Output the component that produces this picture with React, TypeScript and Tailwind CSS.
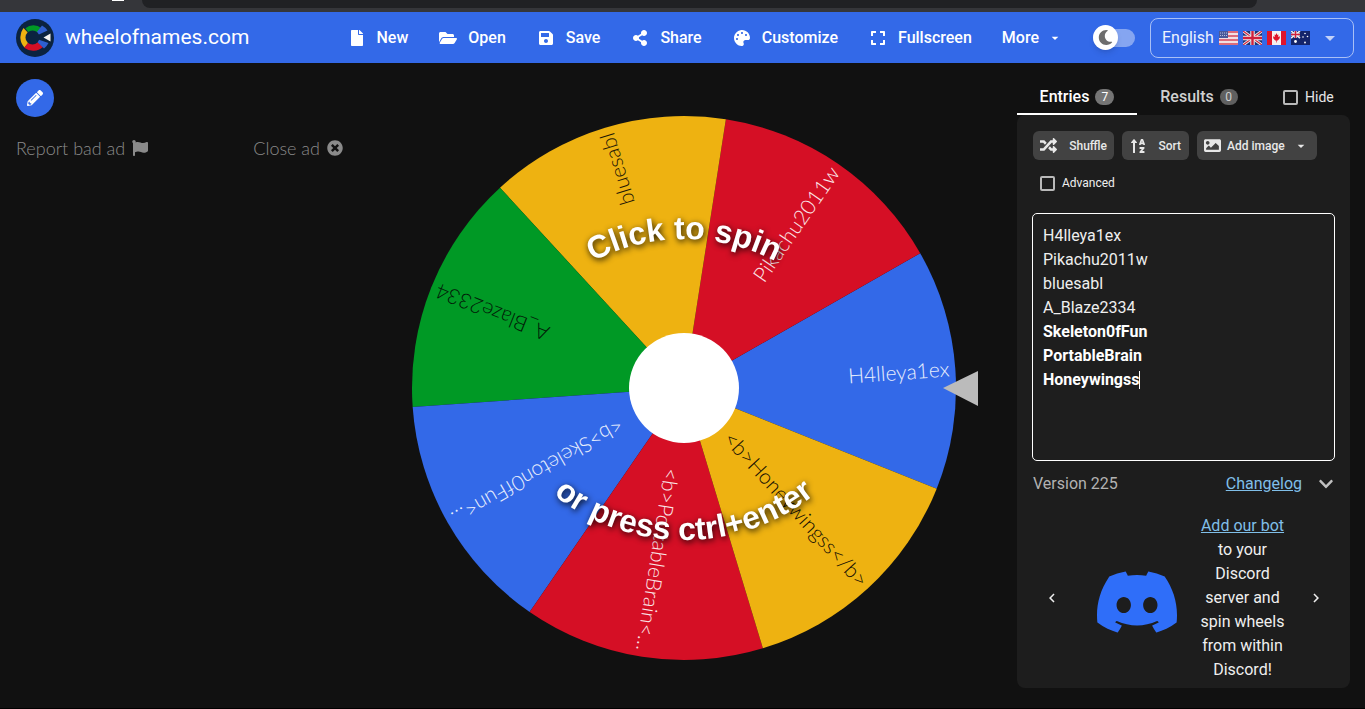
import type { ReactNode } from "react";
import {
  FaExpand,
  FaFile,
  FaFlag,
  FaFolderOpen,
  FaImage,
  FaMoon,
  FaPalette,
  FaPencilAlt,
  FaRandom,
  FaSave,
  FaShareAlt,
  FaSortAlphaUp,
  FaTimesCircle,
  FaChevronDown,
} from "react-icons/fa";
import { MdArrowDropDown, MdChevronLeft, MdChevronRight } from "react-icons/md";
import { SiDiscord } from "react-icons/si";

const BLUE = "#3369e8";
const RED = "#d50f25";
const YELLOW = "#eeb211";
const GREEN = "#009925";

const CX = 325;
const CY = 325;
const RADIUS = 272;
const STEP = 360 / 7;
const FIRST_ANGLE = -4;

const slices = [
  { label: "H4lleya1ex", fill: BLUE, ink: "#e9effd" },
  { label: "Pikachu2011w", fill: RED, ink: "#fbe4e7" },
  { label: "bluesabl", fill: YELLOW, ink: "#1f1806" },
  { label: "A_Blaze2334", fill: GREEN, ink: "#021a07" },
  { label: "<b>Skeleton0fFun<…", fill: BLUE, ink: "#e9effd" },
  { label: "<b>PortableBrain<…", fill: RED, ink: "#fbe4e7" },
  { label: "<b>Honeywingss</b>", fill: YELLOW, ink: "#140f03" },
];

function point(angle: number, r: number) {
  const rad = (angle * Math.PI) / 180;
  return `${(CX + r * Math.cos(rad)).toFixed(2)} ${(CY + r * Math.sin(rad)).toFixed(2)}`;
}

function Wheel() {
  return (
    <svg viewBox="0 0 650 645" className="block w-full cursor-pointer" role="img" aria-label="Wheel of names">
      <defs>
        <path id="arc-top" d="M128 373 A197 197 0 0 1 522 373" />
        <path id="arc-bottom" d="M114 266 A211 211 0 0 0 536 266" />
      </defs>
      {slices.map((s, i) => {
        const mid = FIRST_ANGLE - i * STEP;
        return (
          <path
            key={s.label}
            fill={s.fill}
            d={`M${CX} ${CY} L${point(mid - STEP / 2, RADIUS)} A${RADIUS} ${RADIUS} 0 0 1 ${point(mid + STEP / 2, RADIUS)} Z`}
          />
        );
      })}
      {slices.map((s, i) => (
        <text
          key={s.label}
          x={CX + 266}
          y={CY + 7}
          textAnchor="end"
          fill={s.ink}
          transform={`rotate(${FIRST_ANGLE - i * STEP} ${CX} ${CY})`}
          className="font-['Lato',sans-serif] text-[21px] font-light"
        >
          {s.label}
        </text>
      ))}
      <circle cx={CX} cy={CY} r="55" fill="#fff" />
      <path d="M584 325 L619 308 V343 Z" fill="#bbb" />
      <g className="fill-white font-['Liberation_Sans',sans-serif] text-[32px] font-bold [filter:drop-shadow(1px_2px_3px_rgba(0,0,0,0.9))]">
        <text textAnchor="middle">
          <textPath href="#arc-top" startOffset="50%">
            Click to spin
          </textPath>
        </text>
        <text textAnchor="middle">
          <textPath href="#arc-bottom" startOffset="50%">
            or press ctrl+enter
          </textPath>
        </text>
      </g>
    </svg>
  );
}

function Logo() {
  return (
    <svg viewBox="0 0 38 38" className="size-[38px] shrink-0" aria-hidden="true">
      <circle cx="19" cy="19" r="19" fill="#0b2340" />
      <path d="M16.5 18.5 L9.4 9.2 A12.5 12.5 0 0 1 25.5 9.2 Z" fill={GREEN} />
      <path d="M16.5 18.5 L8.5 28.5 A15 15 0 0 1 7.5 9 Z" fill={YELLOW} />
      <path d="M16.5 18.5 L27 28 A15 15 0 0 1 8.2 28.8 Z" fill={RED} />
      <path d="M16.5 18.5 L26 6.5 A16 16 0 0 1 31.5 11.5 Z" fill="#2f5fd0" />
      <path d="M16.5 18.5 L32.5 24 A16 16 0 0 1 28 29.5 Z" fill="#2f5fd0" />
      <circle cx="16.5" cy="18.5" r="7" fill="#0b2340" />
      <path d="M27.5 18.5 L34.5 14.5 V22.5 Z" fill="#f2f2f2" />
    </svg>
  );
}

function NavButton({ icon, children }: { icon: ReactNode; children: ReactNode }) {
  return (
    <button type="button" className="flex items-center gap-2.5">
      <span className="flex w-5 justify-center">{icon}</span>
      {children}
    </button>
  );
}

function Flags() {
  return (
    <span className="flex gap-[5px]" aria-hidden="true">
      <svg viewBox="0 0 19 14" className="h-3.5 w-[19px]">
        <rect width="19" height="14" fill="#f1dfe2" />
        <path d="M0 1H19M0 5H19M0 9H19M0 13H19" stroke="#d5455a" strokeWidth="1.6" />
        <rect width="9" height="7" fill="#4a5a9a" />
        <path d="M1 2H8M1 4.5H8" stroke="#b9c0de" strokeDasharray="1 1" />
      </svg>
      <svg viewBox="0 0 19 14" className="h-3.5 w-[19px]">
        <rect width="19" height="14" fill="#1d3478" />
        <path d="M0 0 19 14M19 0 0 14" stroke="#eee" strokeWidth="3" />
        <path d="M0 0 19 14M19 0 0 14" stroke="#d0213c" strokeWidth="1.2" />
        <path d="M9.5 0V14M0 7H19" stroke="#eee" strokeWidth="4.4" />
        <path d="M9.5 0V14M0 7H19" stroke="#d0213c" strokeWidth="2.4" />
      </svg>
      <svg viewBox="0 0 19 14" className="h-3.5 w-[19px]">
        <rect width="19" height="14" fill="#f4f0f0" />
        <path d="M0 0H5V14H0ZM14 0H19V14H14Z" fill="#e0142a" />
        <path d="M9.5 2 10.4 4 11.4 3.5 11.2 6 13 5.3 12.6 7.4 10.8 9.4H9.8V11.5H9.2V9.4H8.2L6.4 7.4 6 5.3 7.8 6 7.6 3.5 8.6 4Z" fill="#e0142a" />
      </svg>
      <svg viewBox="0 0 19 14" className="h-3.5 w-[19px]">
        <rect width="19" height="14" fill="#14246b" />
        <path d="M0 0 9 7M9 0 0 7" stroke="#eee" strokeWidth="1.6" />
        <path d="M4.5 0V7M0 3.5H9" stroke="#eee" strokeWidth="2.6" />
        <path d="M4.5 0V7M0 3.5H9" stroke="#d0213c" strokeWidth="1.4" />
        <g fill="#fff">
          <circle cx="4.5" cy="10.5" r="1.4" />
          <circle cx="14" cy="2.5" r="0.8" />
          <circle cx="12" cy="6" r="0.8" />
          <circle cx="16.5" cy="5.5" r="0.8" />
          <circle cx="14" cy="11.5" r="0.9" />
        </g>
      </svg>
    </span>
  );
}

function Header() {
  return (
    <header className="flex h-[51px] shrink-0 items-center bg-[#3369e8] pr-[11px] pl-4 text-white">
      <Logo />
      <span className="ml-[11px] text-[21px]">wheelofnames.com</span>
      <nav className="ml-auto flex items-center gap-[30px] text-base font-medium">
        <NavButton icon={<FaFile />}>New</NavButton>
        <NavButton icon={<FaFolderOpen className="size-[18px]" />}>Open</NavButton>
        <NavButton icon={<FaSave />}>Save</NavButton>
        <NavButton icon={<FaShareAlt />}>Share</NavButton>
        <NavButton icon={<FaPalette />}>Customize</NavButton>
        <NavButton icon={<FaExpand />}>Fullscreen</NavButton>
        <button type="button" className="flex items-center gap-2">
          More
          <MdArrowDropDown className="size-4" />
        </button>
      </nav>
      <button
        type="button"
        role="switch"
        aria-checked="false"
        aria-label="Dark mode"
        className="ml-[30px] flex h-[18px] w-[42px] items-center rounded-full bg-[#85a5f1]"
      >
        <span className="flex size-[25px] shrink-0 items-center justify-center rounded-full bg-white text-[#6d6d6d] shadow-md">
          <FaMoon className="size-[15px]" />
        </span>
      </button>
      <div className="relative ml-[15px] flex h-10 w-[204px] items-center rounded-lg border border-[#a9c0f6]">
        <select aria-label="Language" className="h-full w-full appearance-none bg-transparent pl-[11px] text-base text-[#eef2fd] outline-none">
          <option>English</option>
        </select>
        <span className="pointer-events-none absolute inset-y-0 right-[11px] flex items-center gap-2">
          <Flags />
          <MdArrowDropDown className="size-6 text-[#c3d2f8]" />
        </span>
      </div>
    </header>
  );
}

function Checkbox({ label, className }: { label: string; className: string }) {
  return (
    <label className={`flex items-center gap-[7px] ${className}`}>
      <input type="checkbox" className="size-[15px] appearance-none rounded-[2px] border-2 border-[#b9b9b9]" />
      {label}
    </label>
  );
}

function EntriesPanel() {
  return (
    <aside className="mt-4 mr-[15px] ml-2 w-[333px] shrink-0">
      <div className="flex h-9 items-stretch">
        <div role="tablist" className="flex">
          <button type="button" role="tab" aria-selected="true" className="flex w-[120px] items-center justify-center gap-1.5 border-b-2 border-white pt-0.5 text-base font-medium text-white">
            Entries
            <span className="flex h-4 w-[19px] items-center justify-center rounded-full bg-[#757575] text-xs font-normal">7</span>
          </button>
          <button type="button" role="tab" aria-selected="false" className="flex w-[124px] items-center justify-center gap-1.5 border-b-2 border-transparent pt-0.5 text-base font-medium text-[#d0d0d0]">
            Results
            <span className="flex h-4 w-[18px] items-center justify-center rounded-full bg-[#606060] text-xs font-normal">0</span>
          </button>
        </div>
        <Checkbox label="Hide" className="ml-[22px] text-sm text-[#e6e6e6]" />
      </div>

      <section className="rounded-lg bg-[#1d1d1d] px-4 pt-4 pb-1.5 text-[#efefef]">
        <div className="flex gap-2 text-xs font-medium text-[#e8e8e8]">
          <button type="button" className="flex h-[29px] w-[81px] items-center justify-between rounded-md bg-[#424242] px-[7px]">
            <FaRandom className="size-[17px]" />
            Shuffle
          </button>
          <button type="button" className="flex h-[29px] w-[67px] items-center justify-between rounded-md bg-[#424242] px-2">
            <FaSortAlphaUp className="size-4" />
            Sort
          </button>
          <button type="button" className="flex h-[29px] w-[120px] items-center rounded-md bg-[#424242] px-[7px]">
            <FaImage className="mr-1.5 size-[17px]" />
            Add image
            <MdArrowDropDown className="ml-2 size-4" />
          </button>
        </div>
        <Checkbox label="Advanced" className="mt-[11px] ml-[7px] h-6 text-xs" />
        <div
          role="textbox"
          aria-multiline="true"
          aria-label="Entries"
          contentEditable
          suppressContentEditableWarning
          spellCheck={false}
          className="mt-[18px] -mr-px -ml-px h-[248px] rounded-[5px] border border-white bg-[#1e1e1e] px-2.5 py-[10px] text-base leading-6 outline-none"
        >
          <div>H4lleya1ex</div>
          <div>Pikachu2011w</div>
          <div>bluesabl</div>
          <div>A_Blaze2334</div>
          <div className="font-bold text-white">Skeleton0fFun</div>
          <div className="font-bold text-white">PortableBrain</div>
          <div className="flex items-center font-bold text-white">
            Honeywingss
            <span className="h-[18px] w-px bg-white" />
          </div>
        </div>
        <div className="mt-[11px] flex h-6 items-center text-base">
          <span className="text-[#b2b2b2]">Version 225</span>
          <a href="#changelog" className="ml-auto text-[#80bfe8] underline">Changelog</a>
          <button type="button" aria-label="Show changes" className="ml-4 text-[#c0c0c0]">
            <FaChevronDown className="size-4" />
          </button>
        </div>
        <div className="mt-[18px] flex items-center justify-between">
          <button type="button" aria-label="Previous" className="flex w-[37px] justify-center">
            <MdChevronLeft className="size-[18px]" />
          </button>
          <div className="ml-[18px] flex items-center gap-5">
            <SiDiscord className="mt-2 size-20 text-[#2f6ef9]" />
            <p className="w-[92px] text-center text-base leading-6">
              <a href="#bot" className="text-[#80bfe8] underline">Add our bot</a> to your Discord server and spin wheels from within Discord!
            </p>
          </div>
          <button type="button" aria-label="Next" className="flex w-[37px] justify-center">
            <MdChevronRight className="size-[18px]" />
          </button>
        </div>
      </section>
    </aside>
  );
}

export default function App() {
  return (
    <div className="flex min-h-screen flex-col border-b border-black bg-[#111] font-['Roboto',sans-serif] text-base">
      <div className="h-3 shrink-0 bg-[#35363a] pr-[108px] pl-[142px]" aria-hidden="true">
        <div className="relative h-2 rounded-b-xl bg-[#202124]">
          <span className="absolute top-0 -left-[30px] h-px w-3 bg-white" />
        </div>
      </div>
      <Header />
      <main className="flex flex-1 items-start">
        <div className="w-[359px] shrink-0 pt-4 pr-4 pl-4">
          <button type="button" aria-label="Edit title" className="flex size-[38px] items-center justify-center rounded-full bg-[#3369e8] text-white">
            <FaPencilAlt className="size-4" />
          </button>
          <div className="mt-[19px] flex h-6 items-center justify-between font-['Lato',sans-serif] text-lg font-light text-[#8a8a8a]">
            <button type="button" className="flex items-center gap-[7px]">
              Report bad ad
              <FaFlag className="size-4" />
            </button>
            <button type="button" className="flex items-center gap-[7px]">
              Close ad
              <FaTimesCircle className="size-4" />
            </button>
          </div>
        </div>
        <div className="min-w-0 flex-1">
          <Wheel />
        </div>
        <EntriesPanel />
      </main>
    </div>
  );
}
